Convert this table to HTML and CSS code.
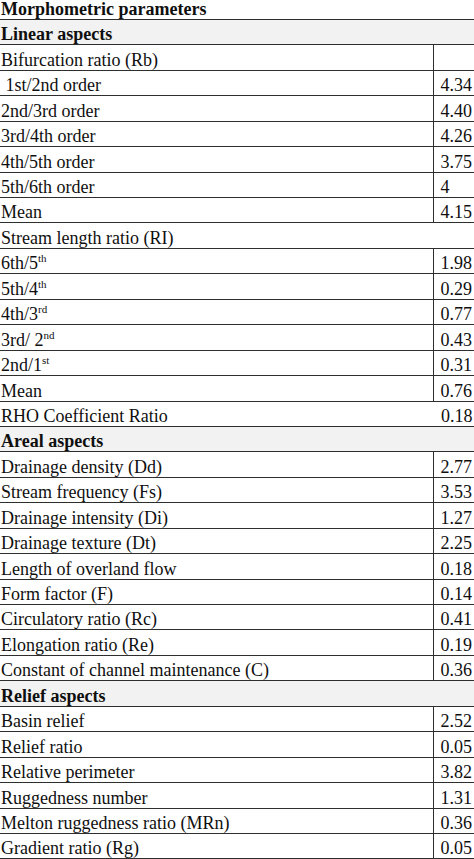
FILE: index.html
```html
<!DOCTYPE html>
<html>
<head>
<meta charset="utf-8">
<link rel="stylesheet" href="styles.css">
</head>
<body>
<table class="morph">
  <colgroup><col class="col-label"><col class="col-val"></colgroup>
  <tr class="title"><td class="label" colspan="2">Morphometric parameters</td></tr>
  <tr class="section"><td class="label" colspan="2">Linear aspects</td></tr>
  <tr><td class="label">Bifurcation ratio (Rb)</td><td class="val"></td></tr>
  <tr><td class="label">&nbsp;1st/2nd order</td><td class="val">4.34</td></tr>
  <tr><td class="label">2nd/3rd order</td><td class="val">4.40</td></tr>
  <tr><td class="label">3rd/4th order</td><td class="val">4.26</td></tr>
  <tr><td class="label">4th/5th order</td><td class="val">3.75</td></tr>
  <tr><td class="label">5th/6th order</td><td class="val">4</td></tr>
  <tr><td class="label">Mean</td><td class="val">4.15</td></tr>
  <tr><td class="label">Stream length ratio (RI)</td><td class="val plain"></td></tr>
  <tr><td class="label">6th/5<sup>th</sup></td><td class="val">1.98</td></tr>
  <tr><td class="label">5th/4<sup>th</sup></td><td class="val">0.29</td></tr>
  <tr><td class="label">4th/3<sup>rd</sup></td><td class="val">0.77</td></tr>
  <tr><td class="label">3rd/ 2<sup>nd</sup></td><td class="val">0.43</td></tr>
  <tr><td class="label">2nd/1<sup>st</sup></td><td class="val">0.31</td></tr>
  <tr><td class="label">Mean</td><td class="val">0.76</td></tr>
  <tr><td class="label">RHO Coefficient Ratio</td><td class="val plain">0.18</td></tr>
  <tr class="section"><td class="label" colspan="2">Areal aspects</td></tr>
  <tr><td class="label">Drainage density (Dd)</td><td class="val">2.77</td></tr>
  <tr><td class="label">Stream frequency (Fs)</td><td class="val">3.53</td></tr>
  <tr><td class="label">Drainage intensity (Di)</td><td class="val">1.27</td></tr>
  <tr><td class="label">Drainage texture (Dt)</td><td class="val">2.25</td></tr>
  <tr><td class="label">Length of overland flow</td><td class="val">0.18</td></tr>
  <tr><td class="label">Form factor (F)</td><td class="val">0.14</td></tr>
  <tr><td class="label">Circulatory ratio (Rc)</td><td class="val">0.41</td></tr>
  <tr><td class="label">Elongation ratio (Re)</td><td class="val">0.19</td></tr>
  <tr><td class="label">Constant of channel maintenance (C)</td><td class="val">0.36</td></tr>
  <tr class="section"><td class="label" colspan="2">Relief aspects</td></tr>
  <tr><td class="label">Basin relief</td><td class="val">2.52</td></tr>
  <tr><td class="label">Relief ratio</td><td class="val">0.05</td></tr>
  <tr><td class="label">Relative perimeter</td><td class="val">3.82</td></tr>
  <tr><td class="label">Ruggedness number</td><td class="val">1.31</td></tr>
  <tr><td class="label">Melton ruggedness ratio (MRn)</td><td class="val">0.36</td></tr>
  <tr><td class="label">Gradient ratio (Rg)</td><td class="val">0.05</td></tr>
</table>
</body>
</html>
```
FILE: styles.css
```css
html, body {
  margin: 0;
  padding: 0;
  background: #ffffff;
  overflow: hidden;
}

.morph {
  border-collapse: collapse;
  margin-top: -5.5px;
  width: 474px;
  font-family: "Liberation Serif", "Times New Roman", serif;
  font-size: 18px;
  color: #0f0f0f;
  table-layout: fixed;
}

.col-label {
  width: 433px;
}

.col-val {
  width: 41px;
}

.morph td {
  height: 20px;
  line-height: 20px;
  padding: 4.45px 0 0 0;
  border-bottom: 1px solid #2e2e2e;
  white-space: nowrap;
  overflow: visible;
  vertical-align: bottom;
}

.morph .label {
  padding-left: 1px;
}

.morph .val {
  border-left: 1px solid #2e2e2e;
  padding-left: 7px;
}

.morph .val.plain {
  border-left: none;
  padding-left: 8px;
}

.title .label,
.section .label {
  font-weight: bold;
}

.section td {
  background: #f2f2f2;
}

.morph sup {
  font-size: 11px;
  line-height: 0;
  vertical-align: 7px;
}
```
